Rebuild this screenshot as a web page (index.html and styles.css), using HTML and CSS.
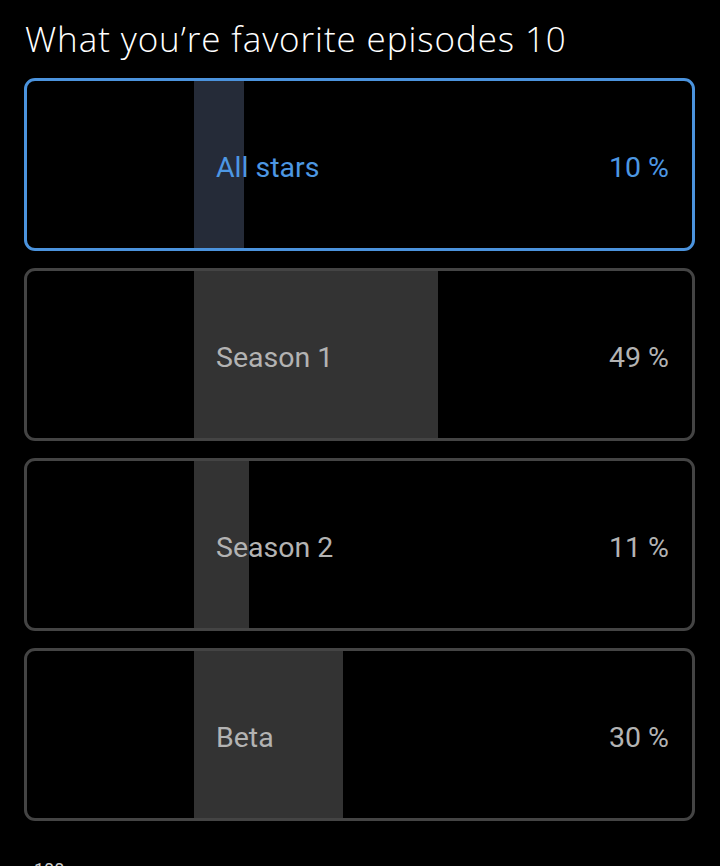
FILE: index.html
```html
<!DOCTYPE html>
<html lang="en">
<head>
<meta charset="utf-8">
<link rel="stylesheet" href="styles.css">
</head>
<body>
<main class="poll">
  <h1 class="poll-title">What you’re favorite episodes 10</h1>
  <ul class="options">
    <li class="option option--selected">
      <div class="track">
        <div class="fill" style="width:10%"></div>
        <div class="row"><span class="label">All stars</span><span class="pct">10 %</span></div>
      </div>
    </li>
    <li class="option">
      <div class="track">
        <div class="fill" style="width:49%"></div>
        <div class="row"><span class="label">Season 1</span><span class="pct">49 %</span></div>
      </div>
    </li>
    <li class="option">
      <div class="track">
        <div class="fill" style="width:11%"></div>
        <div class="row"><span class="label">Season 2</span><span class="pct">11 %</span></div>
      </div>
    </li>
    <li class="option">
      <div class="track">
        <div class="fill" style="width:30%"></div>
        <div class="row"><span class="label">Beta</span><span class="pct">30 %</span></div>
      </div>
    </li>
  </ul>
  <p class="votes">100</p>
</main>
</body>
</html>
```
FILE: styles.css
```css
html, body {
  margin: 0;
  padding: 0;
  background: #000;
}
body {
  font-family: Roboto, "Noto Sans", sans-serif;
  color: #fff;
}
.poll {
  padding: 19px 25px 0 24px;
}
.poll-title {
  margin: 0 0 19px 1px;
  font-family: "Open Sans", Roboto, sans-serif;
  font-size: 35px;
  line-height: 40px;
  letter-spacing: 0.9px;
  font-weight: 300;
  color: #fff;
}
.options {
  list-style: none;
  margin: 0;
  padding: 0;
  display: flex;
  flex-direction: column;
  gap: 17px;
}
.option {
  height: 173px;
  box-sizing: border-box;
  border: 3px solid #444444;
  border-radius: 11px;
  padding-left: 167px;
  display: flex;
}
.option--selected {
  border-color: #4b93dd;
}
.track {
  flex: 1;
  position: relative;
}
.fill {
  position: absolute;
  left: 0;
  top: 0;
  bottom: 0;
  background: #333333;
}
.option--selected .fill {
  background: #252b38;
}
.row {
  position: relative;
  box-sizing: border-box;
  height: 100%;
  display: flex;
  align-items: center;
  justify-content: space-between;
  padding: 6px 23px 0 22px;
  font-size: 28.5px;
  color: #b3b3b3;
}
.option--selected .row {
  color: #4d97e3;
}
.votes {
  margin: 37px 0 0 10px;
  font-size: 18px;
  line-height: 24px;
  color: #cccccc;
}
```
